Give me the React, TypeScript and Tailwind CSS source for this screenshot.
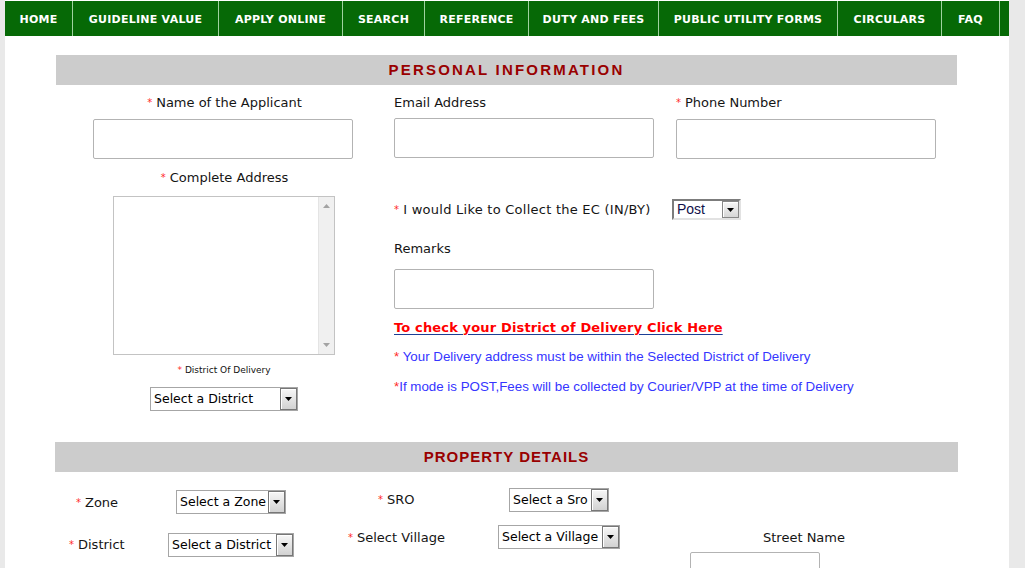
import React from "react";

const navItems: { label: string; w: string }[] = [
  { label: "HOME", w: "w-[68px]" },
  { label: "GUIDELINE VALUE", w: "w-[146px]" },
  { label: "APPLY ONLINE", w: "w-[124px]" },
  { label: "SEARCH", w: "w-[82px]" },
  { label: "REFERENCE", w: "w-[104px]" },
  { label: "DUTY AND FEES", w: "w-[130px]" },
  { label: "PUBLIC UTILITY FORMS", w: "w-[179px]" },
  { label: "CIRCULARS", w: "w-[104px]" },
  { label: "FAQ", w: "w-[58px]" },
];

function Star() {
  return <span className="text-[#ff2a2a] text-[10px] mr-[4px] relative top-[-1px]">*</span>;
}

function Arrow() {
  return (
    <svg width="7" height="4" viewBox="0 0 7 4">
      <path d="M0 0H7L3.5 4Z" fill="#000" />
    </svg>
  );
}

function Sel({ text, cls }: { text: string; cls: string }) {
  return (
    <div className={`flex border border-[#a6a6a6] bg-white ${cls}`}>
      <span className="flex-1 pl-[3px] text-[12.5px] leading-[22px] text-black whitespace-nowrap overflow-hidden">
        {text}
      </span>
      <div className="w-[17px] h-full border border-[#777777] bg-gradient-to-b from-[#f7f7f7] to-[#d2d2d2] shadow-[inset_1px_1px_0_#ffffff] flex items-center justify-center">
        <Arrow />
      </div>
    </div>
  );
}

function Label({ children, star = true, cls = "" }: { children: React.ReactNode; star?: boolean; cls?: string }) {
  return (
    <div className={`text-[13px] leading-[16px] text-[#151515] whitespace-nowrap ${cls}`}>
      {star && <Star />}
      {children}
    </div>
  );
}

export default function App() {
  return (
    <div className="h-[568px] overflow-hidden bg-[#e9e9e9] pl-[5px] font-['DejaVu_Sans',Verdana,sans-serif]">
      <div className="w-[1004px] h-[568px] bg-white pt-[1px]">
        {/* NAV */}
        <nav className="flex h-[35px] bg-[#066906]">
          {navItems.map((n) => (
            <div
              key={n.label}
              className={`${n.w} h-full pt-[4px] border-r border-[#9fd29f] flex items-center justify-center text-white font-bold text-[11px] tracking-[0.25px] whitespace-nowrap`}
            >
              {n.label}
            </div>
          ))}
          <div className="flex-1" />
        </nav>

        {/* PERSONAL INFORMATION */}
        <div className="mt-[19px] ml-[51px] w-[901px] h-[30px] bg-[#cccccc] flex items-center justify-center">
          <span className="font-['Liberation_Sans',Arial,sans-serif] font-bold text-[15px] tracking-[2.2px] text-[#990000]">
            PERSONAL INFORMATION
          </span>
        </div>

        {/* Row 1 */}
        <div className="ml-[51px] mt-[10px] flex">
          <div className="w-[334px] flex flex-col items-center">
            <Label cls="ml-[3px]">Name of the Applicant</Label>
            <input className="mt-[7px] w-[260px] h-[40px] border border-[#b3b3b3] rounded-[2px] bg-white" />
          </div>
          <div className="w-[286px] pl-[4px] flex flex-col">
            <Label star={false}>Email Address</Label>
            <input className="mt-[7px] w-[260px] h-[40px] border border-[#b3b3b3] rounded-[2px] bg-white" />
          </div>
          <div className="flex flex-col">
            <Label>Phone Number</Label>
            <input className="mt-[7px] w-[260px] h-[40px] border border-[#b3b3b3] rounded-[2px] bg-white" />
          </div>
        </div>

        {/* Row 2 */}
        <div className="ml-[51px] mt-[11px] flex">
          <div className="w-[334px] flex flex-col items-center">
            <Label cls="ml-[3px]">Complete Address</Label>
            <div className="mt-[9px] ml-[2px] w-[222px] h-[159px] border border-[#c3c3c3] flex justify-end bg-white">
              <div className="w-[16px] h-full bg-[#f0f0f0] border-l border-[#e4e4e4] flex flex-col items-center justify-between py-[7px]">
                <svg width="7" height="4" viewBox="0 0 7 4">
                  <path d="M0 4H7L3.5 0Z" fill="#a3a3a3" />
                </svg>
                <svg width="7" height="4" viewBox="0 0 7 4">
                  <path d="M0 0H7L3.5 4Z" fill="#a3a3a3" />
                </svg>
              </div>
            </div>
            <div className="mt-[9px] ml-[2px] text-[9px] leading-[12px] text-[#111] whitespace-nowrap">
              <span className="text-[#ff2a2a] text-[9px] mr-[3px]">*</span>District Of Delivery
            </div>
            <Sel text="Select a District" cls="mt-[11px] ml-[2px] w-[148px] h-[24px]" />
          </div>

          <div className="pl-[4px] flex flex-col">
            <div className="mt-[29px] flex items-center">
              <Label cls="w-[278px] tracking-[0.25px] pt-[1px]">I would Like to Collect the EC (IN/BY)</Label>
              <div className="flex w-[69px] h-[21px] border-2 border-t-[#7c7c7c] border-l-[#7c7c7c] border-b-[#e2e2e2] border-r-[#e2e2e2] bg-white">
                <span className="flex-1 pl-[3px] font-['Liberation_Sans',Arial,sans-serif] text-[14px] leading-[17px] text-[#10104a]">
                  Post
                </span>
                <div className="w-[17px] h-full border border-[#888888] bg-gradient-to-b from-[#f7f7f7] to-[#d6d6d6] shadow-[inset_1px_1px_0_#ffffff] flex items-center justify-center">
                  <Arrow />
                </div>
              </div>
            </div>
            <Label star={false} cls="mt-[21px]">Remarks</Label>
            <input className="mt-[12px] w-[260px] h-[40px] border border-[#b3b3b3] rounded-[2px] bg-white" />
            <a className="mt-[11px] text-[13px] leading-[16px] font-bold tracking-[0.15px] text-[#ff0000] underline decoration-[#1d3f95] underline-offset-[2px] whitespace-nowrap cursor-pointer">
              To check your District of Delivery Click Here
            </a>
            <div className="mt-[13px] font-['Liberation_Sans',Arial,sans-serif] text-[13.33px] leading-[15px] text-[#3535ff] whitespace-nowrap">
              <span className="text-[#ff2a2a]">*</span> Your Delivery address must be within the Selected District of Delivery
            </div>
            <div className="mt-[15px] font-['Liberation_Sans',Arial,sans-serif] text-[13.33px] leading-[15px] text-[#3535ff] whitespace-nowrap">
              <span className="text-[#ff2a2a]">*</span>If mode is POST,Fees will be collected by Courier/VPP at the time of Delivery
            </div>
          </div>
        </div>

        {/* PROPERTY DETAILS */}
        <div className="mt-[31px] ml-[50px] w-[903px] h-[30px] bg-[#cccccc] flex items-center justify-center">
          <span className="font-['Liberation_Sans',Arial,sans-serif] font-bold text-[15px] tracking-[1px] text-[#990000]">
            PROPERTY DETAILS
          </span>
        </div>

        {/* Property row 1 */}
        <div className="mt-[16px] ml-[71px] flex items-start">
          <Label cls="w-[100px] mt-[7px]">Zone</Label>
          <Sel text="Select a Zone" cls="w-[110px] h-[24px] mt-[2px]" />
          <Label cls="ml-[92px] w-[131px] mt-[4px]">SRO</Label>
          <Sel text="Select a Sro" cls="w-[100px] h-[24px]" />
        </div>

        {/* Property row 2 */}
        <div className="mt-[11px] ml-[64px] flex items-start">
          <Label cls="w-[99px] mt-[12px]">District</Label>
          <Sel text="Select a District" cls="w-[126px] h-[24px] mt-[8px]" />
          <Label cls="ml-[54px] w-[150px] mt-[5px]">Select Village</Label>
          <Sel text="Select a Village" cls="w-[122px] h-[24px]" />
          <div className="ml-[70px] flex flex-col">
            <Label star={false} cls="ml-[73px] mt-[5px]">Street Name</Label>
            <input className="mt-[6px] w-[130px] h-[40px] border border-[#b3b3b3] rounded-[2px] bg-white" />
          </div>
        </div>
      </div>
    </div>
  );
}
